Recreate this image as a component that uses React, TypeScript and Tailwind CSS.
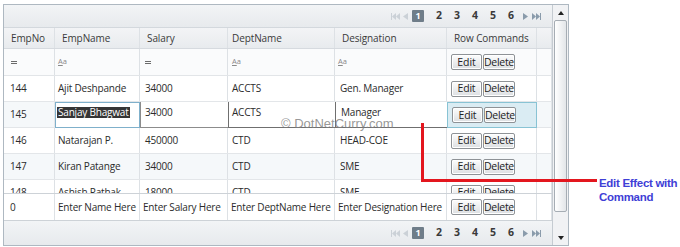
import React from "react";

const cols = "grid grid-cols-[51px_85px_88px_107px_112px_90px_15px]";
const font = { fontFamily: '"Open Sans", "Liberation Sans", sans-serif' };

const rows: string[][] = [
  ["144", "Ajit Deshpande", "34000", "ACCTS", "Gen. Manager"],
  ["145", "Sanjay Bhagwat", "34000", "ACCTS", "Manager"],
  ["146", "Natarajan P.", "450000", "CTD", "HEAD-COE"],
  ["147", "Kiran Patange", "34000", "CTD", "SME"],
  ["148", "Ashish Pathak", "18000", "CTD", "SME"],
];

const Commands = () => (
  <div className="flex items-center gap-[1px] pl-[4px]">
    <button className="h-[16px] w-[31px] rounded-[2px] border border-[#8e9296] bg-linear-to-b from-[#fdfdfd] to-[#dcdfe2] text-[10.5px] leading-none text-[#222] shadow-[inset_0_0_0_1px_#ffffff]">
      Edit
    </button>
    <button className="h-[16px] w-[32px] rounded-[2px] border border-[#8e9296] bg-linear-to-b from-[#fdfdfd] to-[#dcdfe2] text-[10.5px] leading-none tracking-[-0.3px] text-[#222] shadow-[inset_0_0_0_1px_#ffffff]">
      Delete
    </button>
  </div>
);

const Eq = () => (
  <span className="flex flex-col gap-[1px]">
    <span className="block h-[1px] w-[6px] bg-[#6b6b6b]" />
    <span className="block h-[1px] w-[6px] bg-[#6b6b6b]" />
  </span>
);

const Aa = () => (
  <span className="text-[7.5px] text-[#8a8a8a]">
    <span className="underline">A</span>a
  </span>
);

const Arrow = ({ dir, bar, dbl, color }: { dir: "l" | "r"; bar?: boolean; dbl?: boolean; color: string }) => (
  <svg width={dbl ? 9 : 5} height="7" viewBox={dbl ? "0 0 9 7" : "0 0 5 7"}>
    {dir === "l" ? (
      <g fill={color}>
        {bar && <rect x="0" y="0" width="1" height="7" />}
        {dbl ? (
          <>
            <polygon points="1,3.5 5,0 5,7" />
            <polygon points="5,3.5 9,0 9,7" />
          </>
        ) : (
          <polygon points="0,3.5 5,0 5,7" />
        )}
      </g>
    ) : (
      <g fill={color}>
        {dbl ? (
          <>
            <polygon points="0,0 4,3.5 0,7" />
            <polygon points="4,0 8,3.5 4,7" />
            {bar && <rect x="8" y="0" width="1" height="7" />}
          </>
        ) : (
          <polygon points="0,0 5,3.5 0,7" />
        )}
      </g>
    )}
  </svg>
);

const Pager = ({ border }: { border: string }) => (
  <div className={`flex h-full items-center justify-end bg-linear-to-b from-[#f2f4f6] to-[#e7eaed] pr-[11px] ${border}`}>
    <Arrow dir="l" bar dbl color="#cbd1d7" />
    <span className="ml-[3px]">
      <Arrow dir="l" color="#cbd1d7" />
    </span>
    <span className="ml-[4px] flex h-[12px] w-[12px] items-center justify-center rounded-[1px] bg-[#6f7d89] text-[9px] font-bold text-white">
      1
    </span>
    <span className="ml-[6px] flex text-[10.5px] font-bold text-[#3a3a3a]">
      {["2", "3", "4", "5", "6"].map((n) => (
        <span key={n} className="w-[18px] text-center">
          {n}
        </span>
      ))}
    </span>
    <span className="ml-[3px]">
      <Arrow dir="r" color="#8a9bab" />
    </span>
    <span className="ml-[4px]">
      <Arrow dir="r" bar dbl color="#8a9bab" />
    </span>
  </div>
);

const cell = "flex items-center border-r border-[#dde1e5] overflow-hidden whitespace-nowrap";

export default function App() {
  return (
    <div className="relative h-[247px] w-[680px] overflow-hidden bg-white text-[#2b2b2b]" style={font}>
      <div className="ml-[3px] mt-[4px] flex h-[242px] w-[566px] border border-[#aeb8c1]">
        {/* grid */}
        <div className="flex w-[548px] flex-col">
          <div className="h-[23px]">
            <Pager border="border-b border-[#d3d8dd]" />
          </div>

          {/* header */}
          <div className={`${cols} h-[21px] border-b border-[#d6dadf] bg-linear-to-b from-[#f3f4f6] to-[#e8ebee] text-[10px] tracking-[-0.1px] text-[#3a3a3a]`}>
            {["EmpNo", "EmpName", "Salary", "DeptName", "Designation", "Row Commands", ""].map((h, i) => (
              <div key={i} className={`${cell} border-[#d3d8dd] ${i === 3 ? "pl-[4px]" : "pl-[7px]"}`}>
                {h}
              </div>
            ))}
          </div>

          {/* filter row */}
          <div className={`${cols} h-[27px] border-b border-[#e2e5e8] bg-[#fafbfc]`}>
            <div className={`${cell} pl-[7px]`}>
              <Eq />
            </div>
            <div className={`${cell} pl-[3px]`}>
              <Aa />
            </div>
            <div className={`${cell} pl-[5px]`}>
              <Eq />
            </div>
            <div className={`${cell} pl-[4px]`}>
              <Aa />
            </div>
            <div className={`${cell} pl-[3px]`}>
              <Aa />
            </div>
            <div className={cell}>
              <Commands />
            </div>
            <div className={cell} />
          </div>

          {/* data rows */}
          <div className="h-[117px] overflow-hidden text-[10px] tracking-[-0.2px]">
            {rows.map((r, i) => {
              const stripe = i % 2 === 1 ? "bg-[#f5f8fa]" : "bg-white";
              if (i === 1) {
                return (
                  <div key={i} className={`${cols} h-[26px] ${stripe}`}>
                    <div className={`${cell} pl-[6px] border-b border-[#e3e6e9]`}>{r[0]}</div>
                    <div className="flex items-start border border-[#7fb0cb] bg-white pl-[1px] pt-[4px]">
                      <span className="bg-[#353535] px-[1px] leading-[11px] text-white">{r[1]}</span>
                    </div>
                    <div className="flex items-start border-b border-l border-[#8c8c8c] bg-white pl-[4px] pt-[3px]">{r[2]}</div>
                    <div className="flex items-start border-b border-l border-[#6f6f6f] bg-white pl-[3px] pt-[3px]">{r[3]}</div>
                    <div className="flex items-start border-b border-l border-[#6f6f6f] bg-white pl-[5px] pt-[3px]">{r[4]}</div>
                    <div className="flex items-center border border-[#88c3d4] bg-[#daecf3]">
                      <Commands />
                    </div>
                    <div className={`${cell} border-b border-[#e3e6e9]`} />
                  </div>
                );
              }
              return (
                <div key={i} className={`${cols} h-[26px] border-b border-[#e3e6e9] ${stripe}`}>
                  <div className={`${cell} pl-[6px]`}>{r[0]}</div>
                  <div className={`${cell} pl-[3px]`}>{r[1]}</div>
                  <div className={`${cell} pl-[5px]`}>{r[2]}</div>
                  <div className={`${cell} pl-[4px]`}>{r[3]}</div>
                  <div className={`${cell} pl-[5px]`}>{r[4]}</div>
                  <div className={cell}>
                    <Commands />
                  </div>
                  <div className={cell} />
                </div>
              );
            })}
          </div>

          {/* new row */}
          <div className={`${cols} h-[28px] border-y border-[#cdd2d7] bg-white text-[10px] tracking-[-0.2px]`}>
            <div className={`${cell} pl-[6px]`}>0</div>
            <div className={`${cell} pl-[3px]`}>Enter Name Here</div>
            <div className={`${cell} pl-[3px]`}>Enter Salary Here</div>
            <div className={`${cell} pl-[3px]`}>Enter DeptName Here</div>
            <div className={`${cell} pl-[3px]`}>Enter Designation Here</div>
            <div className={cell}>
              <Commands />
            </div>
            <div className={cell} />
          </div>

          <div className="flex-1">
            <Pager border="" />
          </div>
        </div>

        {/* scrollbar */}
        <div className="flex w-[16px] flex-col border-l border-[#c5cbd1] bg-[#f1f2f4]">
          <div className="flex h-[15px] items-center justify-center">
            <svg width="6" height="4" viewBox="0 0 6 4">
              <polygon points="0,4 3,0 6,4" fill="#222" />
            </svg>
          </div>
          <div className="mx-[1px] h-[192px] rounded-[2px] border border-[#a6adb4] bg-linear-to-r from-[#ffffff] to-[#e3e6e9]" />
          <div className="flex-1" />
          <div className="flex h-[15px] items-center justify-center">
            <svg width="6" height="4" viewBox="0 0 6 4">
              <polygon points="0,0 6,0 3,4" fill="#222" />
            </svg>
          </div>
        </div>
      </div>

      {/* watermark */}
      <div
        className="pointer-events-none absolute left-[281px] top-[117px] text-[13px] leading-none text-[#7d7d7d]/80"
        style={{ fontFamily: '"Liberation Sans", sans-serif' }}
      >
        © DotNetCurry.com
      </div>

      {/* annotation */}
      <div className="absolute left-[421px] top-[123px] h-[59px] w-[3px] bg-[#e3161e]" />
      <div className="absolute left-[421px] top-[179px] h-[3px] w-[176px] bg-[#e3161e]" />
      <div
        className="absolute left-[599px] top-[176px] text-[11.5px] font-bold leading-[14px] tracking-[-0.3px] text-[#3f3fd6]"
        style={{ fontFamily: '"Liberation Sans", sans-serif' }}
      >
        Edit Effect with
        <br />
        Command
      </div>
    </div>
  );
}
